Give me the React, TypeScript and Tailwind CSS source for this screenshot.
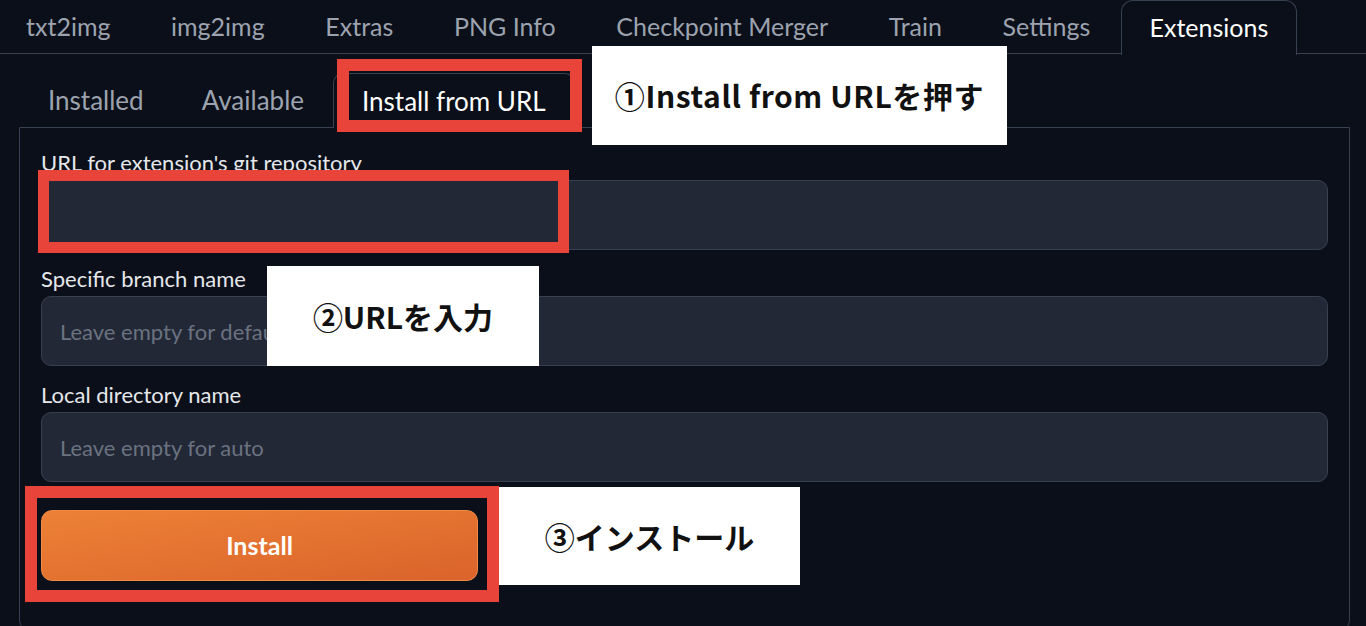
import React from "react"

const topTabs = ["txt2img", "img2img", "Extras", "PNG Info", "Checkpoint Merger", "Train", "Settings", "Extensions"]
const subTabs = ["Installed", "Available", "Install from URL"]

const ui = { fontFamily: "Lato, 'Noto Sans', sans-serif" }
const jp = { fontFamily: "'Noto Sans CJK JP', 'Noto Sans', sans-serif" }

function Field({ label, placeholder }: { label: string; placeholder?: string }) {
  return (
    <div className="flex flex-col">
      <span className="text-[22px] leading-[24px] text-[#e5e7eb] mb-[5px]">{label}</span>
      <div className="h-[70px] rounded-[10px] border border-[#374151] bg-[#222836] flex items-center px-[18px]">
        {placeholder && <span className="text-[22px] text-[#6b7280]">{placeholder}</span>}
      </div>
    </div>
  )
}

function Note({ className, children }: { className: string; children: React.ReactNode }) {
  return (
    <div
      className={`absolute bg-white flex items-center justify-center text-[30px] font-bold text-[#111] ${className}`}
      style={jp}
    >
      {children}
    </div>
  )
}

export default function App() {
  return (
    <div className="relative w-[1366px] h-[626px] overflow-hidden bg-[#0b0f19]" style={ui}>
      {/* top tabs */}
      <div className="flex h-[54px] border-b border-[#374151]">
        {topTabs.map((t) => {
          const active = t === "Extensions"
          return (
            <div
              key={t}
              className={
                active
                  ? "px-[28px] -mb-px flex items-center text-[25px] text-white border border-b-0 border-[#374151] rounded-t-[12px] bg-[#0b0f19] h-[55px]"
                  : "px-[29.3px] first:pl-[25px] flex items-center text-[25px] text-[#9ca3af] border border-transparent"
              }
            >
              {t}
            </div>
          )
        })}
      </div>

      <div className="px-[19px]">
        {/* sub tabs */}
        <div className="flex mt-[19px] h-[54px]">
          {subTabs.map((t) => {
            const active = t === "Install from URL"
            return (
              <div
                key={t}
                className={
                  active
                    ? "px-[28px] -mb-px flex items-center text-[26px] text-white border border-b-0 border-[#374151] rounded-t-[10px] bg-[#0b0f19] h-[55px] relative z-10"
                    : "px-[28px] flex items-center text-[26px] text-[#9ca3af] border border-transparent"
                }
              >
                {t}
              </div>
            )
          })}
        </div>

        {/* panel */}
        <div className="w-[1331px] h-[505px] border border-[#374151] rounded-b-[12px] px-[21px] pt-[23px] flex flex-col">
          <div className="flex flex-col gap-[17px]">
            <Field label="URL for extension's git repository" />
            <Field label="Specific branch name" placeholder="Leave empty for default main branch" />
            <Field label="Local directory name" placeholder="Leave empty for auto" />
          </div>
          <button className="mt-[28px] w-[437px] h-[71px] rounded-[11px] border border-[#f08a45] bg-gradient-to-br from-[#ed8136] to-[#da632b] text-white text-[25px] font-bold">
            Install
          </button>
        </div>
      </div>

      {/* annotation frames */}
      <div className="absolute left-[337px] top-[59px] w-[245px] h-[73px] border-[12px] border-[#e9443a] z-20" />
      <div className="absolute left-[38px] top-[170px] w-[531px] h-[83px] border-[11px] border-[#e9443a]" />
      <div className="absolute left-[25px] top-[486px] w-[474px] h-[116px] border-[12px] border-[#e9443a]" />

      <Note className="left-[592px] top-[46px] w-[415px] h-[99px] z-20 tracking-[0.6px]">①Install from URLを押す</Note>
      <Note className="left-[267px] top-[266px] w-[272px] h-[100px]">②URLを入力</Note>
      <Note className="left-[499px] top-[487px] w-[301px] h-[98px]">③インストール</Note>
    </div>
  )
}
